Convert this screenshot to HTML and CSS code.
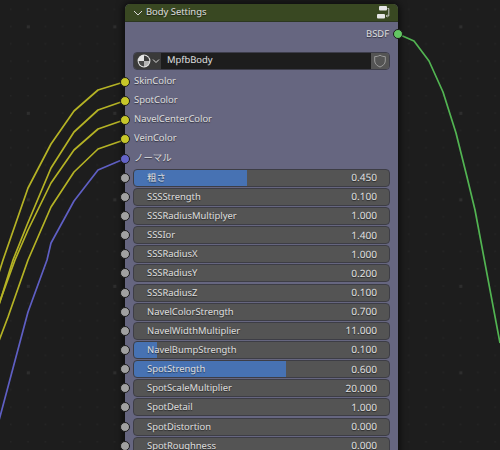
FILE: index.html
```html
<!DOCTYPE html>
<html lang="en">
<head>
<meta charset="utf-8">
<title>Body Settings</title>
<link rel="stylesheet" href="styles.css">
</head>
<body>
<main class="canvas">
  <svg class="backdrop" width="500" height="450" viewBox="0 0 500 450">
    <defs>
      <pattern id="grid" x="10" y="8.5" width="86.5" height="86.5" patternUnits="userSpaceOnUse">
        <g class="dot">
          <rect x="0" y="0" width="1.5" height="1.5"/><rect x="17.3" y="0" width="1.5" height="1.5"/><rect x="34.6" y="0" width="1.5" height="1.5"/><rect x="51.9" y="0" width="1.5" height="1.5"/><rect x="69.2" y="0" width="1.5" height="1.5"/>
          <rect x="0" y="17.3" width="1.5" height="1.5"/><rect x="34.6" y="17.3" width="1.5" height="1.5"/><rect x="51.9" y="17.3" width="1.5" height="1.5"/><rect x="69.2" y="17.3" width="1.5" height="1.5"/>
          <rect x="0" y="34.6" width="1.5" height="1.5"/><rect x="17.3" y="34.6" width="1.5" height="1.5"/><rect x="34.6" y="34.6" width="1.5" height="1.5"/><rect x="51.9" y="34.6" width="1.5" height="1.5"/><rect x="69.2" y="34.6" width="1.5" height="1.5"/>
          <rect x="0" y="51.9" width="1.5" height="1.5"/><rect x="17.3" y="51.9" width="1.5" height="1.5"/><rect x="34.6" y="51.9" width="1.5" height="1.5"/><rect x="51.9" y="51.9" width="1.5" height="1.5"/><rect x="69.2" y="51.9" width="1.5" height="1.5"/>
          <rect x="0" y="69.2" width="1.5" height="1.5"/><rect x="17.3" y="69.2" width="1.5" height="1.5"/><rect x="34.6" y="69.2" width="1.5" height="1.5"/><rect x="51.9" y="69.2" width="1.5" height="1.5"/><rect x="69.2" y="69.2" width="1.5" height="1.5"/>
        </g>
        <rect class="major" x="16.8" y="16.8" width="3" height="3"/>
      </pattern>
    </defs>
    <rect width="500" height="450" fill="url(#grid)"/>
    <g class="wire yellow">
      <polyline points="124,82 98,90 74,111 51,144 28,188 3,260 -4,282"/>
      <polyline points="124,101 98,110 74,132 51,168 27,225 13,260 -2,308"/>
      <polyline points="124,120 98,129 74,150 51,183 28,230 15,260 -4,312"/>
      <polyline points="124,140 98,149 74,172 51,207 28,260 8,317 -3,346"/>
    </g>
    <polyline class="wire blue" points="124,159 98,170 74,201 51,243 47,260 28,312 -3,428"/>
    <polyline class="wire green" points="398,34 414,41 429,61 443,92 456,133 467,177 475,210 500,343"/>
  </svg>

  <article class="node">
    <header class="node-head">
      <svg class="chev" width="10" height="10" viewBox="0 0 10 10"><path d="M1 3 L5 7 L9 3"/></svg>
      <span class="node-title">Body Settings</span>
      <svg class="group-icon" width="14" height="15" viewBox="0 0 14 15">
        <rect x="3" y="1" width="8" height="4.5" rx="1" fill="#e6e6e6"/>
        <rect x="1" y="9" width="8" height="4.5" rx="1" fill="#e6e6e6"/>
        <path d="M11.5 3.5 H12.8 V11 H10.5 M11.3 10 L10.2 11 L11.3 12" fill="none" stroke="#d8d8d8" stroke-width="0.9"/>
      </svg>
    </header>
    <div class="output-row">
      <span class="label">BSDF</span>
      <i class="socket socket-out green-s"></i>
    </div>
    <div class="selector">
      <div class="browse">
        <svg width="14" height="14" viewBox="0 0 14 14">
          <circle cx="7" cy="7" r="6.4" fill="#e4e4e4"/>
          <path d="M7 7 V1.6 A5.4 5.4 0 0 1 12.4 7 Z" fill="#3c3c3c"/>
          <path d="M7 7 H1.6 A5.4 5.4 0 0 0 7 12.4 Z" fill="#4a4a4a"/>
          <path d="M7 7 H12.4 A5.4 5.4 0 0 1 7 12.4 Z" fill="#b5b5b5"/>
        </svg>
        <svg class="chev-small" width="8" height="8" viewBox="0 0 8 8"><path d="M1 2.5 L4 5.5 L7 2.5"/></svg>
      </div>
      <div class="name">MpfbBody</div>
      <div class="shield">
        <svg width="14" height="14" viewBox="0 0 14 14"><path d="M7 1.2 C5 2.4 3.5 2.6 1.7 2.6 V7 C1.7 10 4.5 12 7 13 C9.5 12 12.3 10 12.3 7 V2.6 C10.5 2.6 9 2.4 7 1.2 Z"/></svg>
      </div>
    </div>
    <div class="inputs">
      <div class="input"><i class="socket yellow-s"></i><span class="label">SkinColor</span></div>
      <div class="input"><i class="socket yellow-s"></i><span class="label">SpotColor</span></div>
      <div class="input"><i class="socket yellow-s"></i><span class="label">NavelCenterColor</span></div>
      <div class="input"><i class="socket yellow-s"></i><span class="label">VeinColor</span></div>
      <div class="input"><i class="socket blue-s"></i><span class="label">ノーマル</span></div>
      <div class="input"><i class="socket"></i><div class="slider" style="--v:44.5%"><span>粗さ</span><span class="value">0.450</span></div></div>
      <div class="input"><i class="socket"></i><div class="slider"><span>SSSStrength</span><span class="value">0.100</span></div></div>
      <div class="input"><i class="socket"></i><div class="slider"><span>SSSRadiusMultiplyer</span><span class="value">1.000</span></div></div>
      <div class="input"><i class="socket"></i><div class="slider"><span>SSSIor</span><span class="value">1.400</span></div></div>
      <div class="input"><i class="socket"></i><div class="slider"><span>SSSRadiusX</span><span class="value">1.000</span></div></div>
      <div class="input"><i class="socket"></i><div class="slider"><span>SSSRadiusY</span><span class="value">0.200</span></div></div>
      <div class="input"><i class="socket"></i><div class="slider"><span>SSSRadiusZ</span><span class="value">0.100</span></div></div>
      <div class="input"><i class="socket"></i><div class="slider"><span>NavelColorStrength</span><span class="value">0.700</span></div></div>
      <div class="input"><i class="socket"></i><div class="slider"><span>NavelWidthMultiplier</span><span class="value">11.000</span></div></div>
      <div class="input"><i class="socket"></i><div class="slider" style="--v:9%"><span>NavelBumpStrength</span><span class="value">0.100</span></div></div>
      <div class="input"><i class="socket"></i><div class="slider" style="--v:59.5%"><span>SpotStrength</span><span class="value">0.600</span></div></div>
      <div class="input"><i class="socket"></i><div class="slider"><span>SpotScaleMultiplier</span><span class="value">20.000</span></div></div>
      <div class="input"><i class="socket"></i><div class="slider"><span>SpotDetail</span><span class="value">1.000</span></div></div>
      <div class="input"><i class="socket"></i><div class="slider"><span>SpotDistortion</span><span class="value">0.000</span></div></div>
      <div class="input"><i class="socket"></i><div class="slider"><span>SpotRoughness</span><span class="value">0.000</span></div></div>
    </div>
  </article>
</main>
</body>
</html>
```
FILE: styles.css
```css
* { box-sizing: border-box; }
html, body { margin: 0; padding: 0; background: #1d1d1d; }
body { width: 500px; height: 450px; overflow: hidden; }
.canvas {
  position: relative;
  width: 500px;
  height: 450px;
  overflow: hidden;
  background: #1d1d1d;
  font-family: "Noto Sans", "Noto Sans CJK JP", sans-serif;
  font-size: 9.4px;
  line-height: 14px;
  color: #e0e0e0;
  text-rendering: geometricPrecision;
}
.backdrop { position: absolute; left: 0; top: 0; display: block; }
.dot rect { fill: #252525; }
.major { fill: #2e2e2e; }
.wire polyline, polyline.wire { fill: none; stroke-width: 1.7; stroke-linejoin: round; }
.yellow polyline { stroke: #b5b325; }
.blue { stroke: #5f5fc4; }
.green { stroke: #52b452; }

.node {
  position: absolute;
  left: 125px;
  top: 4px;
  width: 273px;
  height: 520px;
  background: #666680;
  border-radius: 5px 5px 0 0;
  box-shadow: 0 0 7px 2px rgba(0, 0, 0, .55);
}
.node-head {
  display: flex;
  align-items: center;
  height: 18px;
  padding: 0 8px 0 8px;
  background: #394822;
  border-radius: 5px 5px 0 0;
  border-bottom: 1px solid #2c3720;
}
.node-title { flex: 1; margin-left: 3px; margin-top: -1px; text-shadow: 0 1px 1px rgba(0,0,0,.6); }
.chev path, .chev-small path { fill: none; stroke: #d8d8d8; stroke-width: 1; }
.label, .slider span { text-shadow: 0 1px 1px rgba(0,0,0,.55); white-space: nowrap; }
.label, .name { padding-bottom: 2px; }
.output-row .label { padding-bottom: 1px; }
.slider .value { font-size: 10.1px; padding-bottom: 1px; }

.output-row {
  position: relative;
  display: flex;
  justify-content: flex-end;
  align-items: center;
  height: 18px;
  margin-top: 3px;
  padding-right: 9px;
}
.selector {
  display: flex;
  height: 18px;
  margin: 9px 8px 0 8px;
  border: 1px solid #3d3d4a;
  border-radius: 4px;
  overflow: hidden;
}
.browse {
  display: flex;
  align-items: center;
  gap: 1px;
  width: 27px;
  padding-left: 3px;
  background: #3a3a3a;
}
.browse svg { display: block; flex: none; }
.name {
  flex: 1;
  display: flex;
  align-items: center;
  padding-left: 6px;
  background: #1d1d1d;
}
.shield {
  display: flex;
  align-items: center;
  justify-content: center;
  width: 18px;
  background: #545454;
}
.shield path { fill: none; stroke: #9a9a9a; stroke-width: 1; }

.inputs {
  display: flex;
  flex-direction: column;
  gap: 1.15px;
  margin-top: 3px;
  padding: 0 8px 0 8px;
}
.input {
  position: relative;
  display: flex;
  align-items: center;
  height: 18px;
}
.input .label { padding-left: 1px; }
.socket {
  position: absolute;
  left: -13px;
  top: 4px;
  width: 10px;
  height: 10px;
  border-radius: 50%;
  background: #a1a1a1;
  border: 1px solid #1a1a1a;
}
.socket-out { left: auto; right: -5px; }
.yellow-s { background: #c7c729; }
.blue-s { background: #6363c7; }
.green-s { background: #63c763; }
.slider {
  --v: 0%;
  flex: 1;
  display: flex;
  justify-content: space-between;
  align-items: center;
  height: 18px;
  padding: 0 12px 0 13px;
  border: 1px solid #3d3d45;
  border-radius: 4px;
  background: linear-gradient(to right, #4772b3 var(--v), #545454 var(--v));
}
```
